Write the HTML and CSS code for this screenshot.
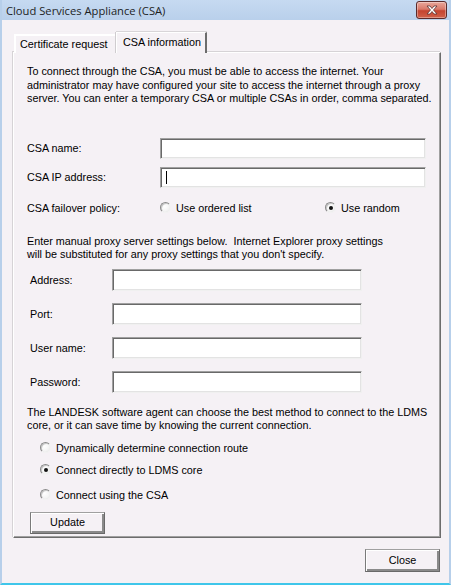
FILE: index.html
```html
<!DOCTYPE html>
<html>
<head>
<meta charset="utf-8">
<link rel="stylesheet" href="styles.css">
</head>
<body>
<div class="window">
  <div class="titlebar">
    <span class="title">Cloud Services Appliance (CSA)</span>
    <div class="close-x">
      <svg width="16" height="10" viewBox="0 0 16 10"><path d="M3 1 L6 1 L8 3.5 L10 1 L13 1 L9.5 5 L13 9 L10 9 L8 6.5 L6 9 L3 9 L6.5 5 Z" fill="#fff" stroke="#5a3030" stroke-width="0.8" stroke-linejoin="round"/></svg>
    </div>
  </div>
  <div class="client">
    <div class="tabs">
      <div class="tab">Certificate request</div>
      <div class="tab active">CSA information</div>
    </div>
    <div class="panel">
      <p class="para p1">To connect through the CSA, you must be able to access the internet. Your<br>administrator may have configured your site to access the internet through a proxy<br>server. You can enter a temporary CSA or multiple CSAs in order, comma separated.</p>

      <div class="row row-name">
        <span class="label wide">CSA name:</span>
        <div class="field long"></div>
      </div>
      <div class="row row-ip">
        <span class="label wide">CSA IP address:</span>
        <div class="field long"><span class="caret"></span></div>
      </div>
      <div class="row row-policy">
        <span class="label wide">CSA failover policy:</span>
        <span class="radio-item w-ordered"><span class="radio"></span>Use ordered list</span>
        <span class="radio-item"><span class="radio checked"></span>Use random</span>
      </div>

      <p class="para p2">Enter manual proxy server settings below.&nbsp; Internet Explorer proxy settings<br>will be substituted for any proxy settings that you don't specify.</p>

      <div class="proxy">
        <div class="row prow"><span class="label narrow">Address:</span><div class="field short"></div></div>
        <div class="row prow"><span class="label narrow">Port:</span><div class="field short"></div></div>
        <div class="row prow"><span class="label narrow">User name:</span><div class="field short"></div></div>
        <div class="row prow"><span class="label narrow">Password:</span><div class="field short"></div></div>
      </div>

      <p class="para p3">The LANDESK software agent can choose the best method to connect to the LDMS<br>core, or it can save time by knowing the current connection.</p>

      <div class="routes">
        <span class="radio-item r1"><span class="radio"></span>Dynamically determine connection route</span>
        <span class="radio-item r2"><span class="radio checked"></span>Connect directly to LDMS core</span>
        <span class="radio-item r3"><span class="radio"></span>Connect using the CSA</span>
      </div>

      <div class="btn update">Update</div>
    </div>
    <div class="footer">
      <div class="btn close">Close</div>
    </div>
  </div>
</div>
</body>
</html>
```
FILE: styles.css
```css
* { box-sizing: border-box; }
html, body { margin: 0; padding: 0; }
body {
  font-family: "Liberation Sans", Arial, sans-serif;
  font-size: 10.8px;
  color: #000;
  background: #f5f1f5;
}
.window {
  width: 451px;
  height: 585px;
  display: flex;
  flex-direction: column;
  border-left: 2px solid #b7cfea;
  border-right: 2px solid #b7cfea;
  border-bottom: 2px solid #3fc6ea;
  background: #f5f1f5;
}
.titlebar {
  height: 20px;
  flex: none;
  display: flex;
  align-items: center;
  justify-content: space-between;
  background: linear-gradient(#c6daf1, #b9d0eb);
  padding-left: 4px;
  padding-right: 2px;
}
.title {
  font-family: "Open Sans", "Noto Sans", sans-serif;
  font-size: 11.2px;
  color: #1e1e1e;
}
.close-x {
  width: 31px;
  height: 18px;
  margin-top: -1px;
  border: 1px solid #5b2a2a;
  border-radius: 3px;
  background: linear-gradient(#e9a89b 0%, #d9796a 45%, #c4432f 55%, #d0614a 100%);
  box-shadow: inset 0 0 0 1px rgba(255,255,255,0.35);
  display: flex;
  align-items: center;
  justify-content: center;
}
.client {
  flex: 1;
  padding: 12px 9px 0 11px;
  display: flex;
  flex-direction: column;
}
.tabs {
  display: flex;
  align-items: flex-end;
  padding-left: 1px;
  height: 21px;
  position: relative;
  z-index: 1;
  margin-bottom: -1px;
}
.tab {
  height: 19px;
  width: 102px;
  padding-left: 5px;
  line-height: 18px;
  border: 1px solid #d6d3d6;
  border-bottom: none;
  border-top-color: #fff;
  border-left-color: #fff;
  background: #f5f1f5;
  box-shadow: inset 1px 1px 0 #fff;
}
.tab.active {
  height: 21px;
  width: 91px;
  padding-left: 6px;
  line-height: 19px;
  border-right: 2px solid #6c6c6c;
  border-left: 1px solid #fff;
  border-top: 1px solid #fff;
  box-shadow: -1px 0 0 #cfcccf, 0 -1px 0 #d8d5d8;
}
.panel {
  width: 428px;
  height: 486px;
  border: 1px solid;
  border-color: #fff #6c6c6c #6c6c6c #fff;
  box-shadow: -1px -1px 0 #d6d3d6, inset -1px -1px 0 #a0a0a0;
  padding: 12px 0 0 13px;
  display: flex;
  flex-direction: column;
  align-items: flex-start;
}
.para {
  margin: 0;
  line-height: 13.5px;
  white-space: nowrap;
}
.p3 { line-height: 13px; }
.row {
  display: flex;
  align-items: center;
}
.label.wide { width: 133px; }
.label.narrow { width: 85px; padding-left: 3px; }
.field {
  height: 22px;
  background: #fff;
  border: 1px solid;
  border-color: #a0a0a0 #f0f0f0 #f0f0f0 #a0a0a0;
  box-shadow: inset 1px 1px 0 #696969, inset -1px -1px 0 #e3e3e3;
  display: flex;
  align-items: center;
}
.field.long { width: 266px; height: 21px; }
.field.short { width: 250px; }
.caret {
  width: 1px;
  height: 13px;
  background: #000;
  margin-left: 5px;
}
.row-name { margin-top: 32px; }
.row-ip { margin-top: 8px; }
.row-policy { margin-top: 13px; height: 14px; }
.radio-item {
  display: flex;
  align-items: center;
  height: 14px;
  white-space: nowrap;
}
.w-ordered { width: 165px; }
.radio {
  width: 11px;
  height: 11px;
  border-radius: 50%;
  margin-right: 5px;
  border: 1px solid;
  border-color: #8a8a8a #f2f2f2 #f2f2f2 #8a8a8a;
  background: radial-gradient(circle at 40% 40%, #ffffff 0%, #f3f3f3 60%, #dcdcdc 100%);
  box-shadow: inset 1px 1px 0 #c8c8c8;
  display: flex;
  align-items: center;
  justify-content: center;
  flex: none;
}
.radio.checked::after {
  content: "";
  width: 4px;
  height: 4px;
  border-radius: 50%;
  background: #111;
}
.p2 { margin-top: 20px; }
.proxy { margin-top: 7px; display: flex; flex-direction: column; gap: 12px; }
.p3 { margin-top: 13px; }
.routes {
  display: flex;
  flex-direction: column;
  padding-left: 13px;
}
.r1 { margin-top: 9px; }
.r2 { margin-top: 8px; }
.r3 { margin-top: 11px; }
.btn {
  width: 75px;
  height: 22px;
  display: flex;
  align-items: center;
  justify-content: center;
  border: 1px solid #696969;
  border-top-color: #a0a0a0;
  border-left-color: #7a7a7a;
  background: #f5f1f5;
  box-shadow: inset 1px 1px 0 #fff, inset -2px -2px 0 #8a8a8a;
  padding-bottom: 1px;
}
.update { margin-top: 10px; margin-left: 3px; }
.footer {
  display: flex;
  justify-content: flex-end;
  padding-top: 11px;
}
.btn.close { height: 23px; }
```
